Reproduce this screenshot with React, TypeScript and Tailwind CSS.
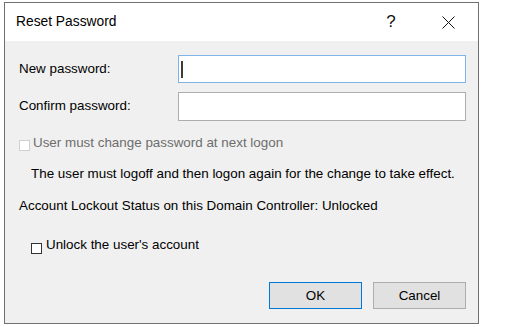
import React from "react";

function CheckBox({ disabled }: { disabled?: boolean }) {
  return (
    <div
      className={
        disabled
          ? "mt-[5px] h-[11px] w-[11px] shrink-0 border border-[#d0d0d0] bg-white"
          : "mt-[6px] h-[11px] w-[11px] shrink-0 border border-[#333333] bg-white"
      }
    />
  );
}

function ResetPasswordDialog() {
  return (
    <div className="ml-[4px] mt-[2px] flex h-[322px] w-[475px] flex-col border border-[#707070] bg-white">
      {/* title bar */}
      <div className="flex h-[38px] shrink-0 items-center bg-white pr-[23px]">
        <span className="pl-[11px] text-[13.8px] leading-[16px] text-black">Reset Password</span>
        <span className="ml-auto flex w-[20px] justify-center text-[17px] leading-[20px] text-[#111]">?</span>
        <svg className="ml-[41px]" width="13" height="13" viewBox="0 0 13 13">
          <path d="M0.5 0.5 L12.5 12.5 M12.5 0.5 L0.5 12.5" stroke="#111" strokeWidth="1" fill="none" />
        </svg>
      </div>

      {/* body */}
      <div className="flex flex-1 flex-col bg-[#f0f0f0] pl-[14px] text-[13.4px] leading-[16px] text-black">
        <div className="mt-[14px] flex h-[28px]">
          <label className="w-[159px] pt-[6px]">New password:</label>
          <div className="flex h-[28px] w-[288px] items-center border border-[#7eb4ea] bg-white pl-[2px]">
            <div className="h-[17px] w-[2px] bg-[#3c3c3c]" />
          </div>
        </div>

        <div className="mt-[9px] flex h-[29px]">
          <label className="w-[159px] pt-[6px]">Confirm password:</label>
          <div className="h-[29px] w-[288px] border border-[#adadad] bg-white" />
        </div>

        <div className="mt-[14px] flex h-[16px] gap-[3px]">
          <CheckBox disabled />
          <span className="text-[#6d6d6d]">User must change password at next logon</span>
        </div>

        <p className="mt-[15px] pl-[12px]">
          The user must logoff and then logon again for the change to take effect.
        </p>

        <p className="mt-[16px]">Account Lockout Status on this Domain Controller: Unlocked</p>

        <div className="mt-[23px] flex h-[16px] gap-[4px] pl-[12px]">
          <CheckBox />
          <span>Unlock the user's account</span>
        </div>

        <div className="mt-[29px] flex justify-end gap-[11px] pr-[12px]">
          <button className="h-[27px] w-[93px] border border-[#0078d7] bg-[#e1e1e1] text-[13.4px] text-black">
            OK
          </button>
          <button className="h-[27px] w-[93px] border border-[#adadad] bg-[#e1e1e1] text-[13.4px] text-black">
            Cancel
          </button>
        </div>
      </div>
    </div>
  );
}

export default function App() {
  return (
    <div className="h-[327px] w-[507px] overflow-hidden bg-white font-['Liberation_Sans',Arial,sans-serif]">
      <ResetPasswordDialog />
    </div>
  );
}
